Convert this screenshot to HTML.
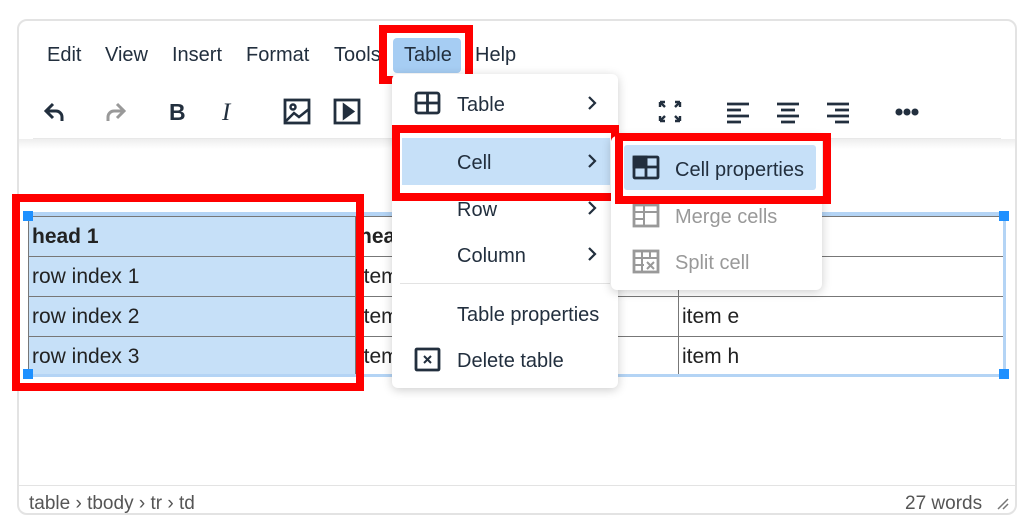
<!DOCTYPE html>
<html><head><style>
*{box-sizing:border-box;margin:0;padding:0}
body{width:1024px;height:532px;background:#fff;font-family:"Liberation Sans",sans-serif;color:#222f3e;position:relative;overflow:hidden}
.abs{position:absolute}
.ed{left:17px;top:19px;width:1000px;height:496px;border:2px solid #e3e3e3;border-radius:10px}
.mb{font-size:20px;top:44px}
.sep{left:33px;top:138px;width:968px;height:1px;background:#e8e8e8}
.shadow{left:19px;top:139px;width:996px;height:10px;background:linear-gradient(#eee,#fff)}
table{border-collapse:collapse;font-size:21px}
td{border:1px solid #777;height:40px;padding:0 3px;color:#222}
.sel{background:#c6e0f8}
.h{width:10px;height:10px;background:#1e90ff}
.red{border:8px solid #f00}
.menu{background:#fff;border-radius:6px;box-shadow:0 2px 10px rgba(0,0,0,.2)}
.it{font-size:20px;color:#222f3e}
.g{color:#999}
.st{font-size:19px;color:#555}
</style></head><body>
<div class="abs ed"></div>
<div class="abs mb" style="left:47px">Edit</div>
<div class="abs mb" style="left:105px">View</div>
<div class="abs mb" style="left:172px">Insert</div>
<div class="abs mb" style="left:246px">Format</div>
<div class="abs mb" style="left:334px">Tools</div>
<div class="abs" style="left:393px;top:38px;width:68px;height:35px;background:#a6cdf3;border-radius:4px"></div>
<div class="abs mb" style="left:404px">Table</div>
<div class="abs mb" style="left:475px">Help</div>
<div class="abs red" style="left:379px;top:25px;width:94px;height:59px"></div>

<svg class="abs" style="left:0;top:90px" width="1024" height="45" fill="none" stroke="#222f3e" stroke-width="2.5">
<path d="M53 14 l-7 7 7 7 M46 21 h10 a6 6 0 0 1 6 6 v4" stroke-width="3"/>
<path d="M117 14 l7 7 -7 7 M124 21 h-10 a6 6 0 0 0 -6 6 v4" stroke="#999" stroke-width="3"/>
<text x="169" y="30" font-size="23" font-weight="bold" fill="#222f3e" stroke="none" font-family="Liberation Sans">B</text>
<text x="222" y="30" font-size="25" font-style="italic" fill="#222f3e" stroke="none" font-family="Liberation Serif">I</text>
<rect x="285" y="10" width="24" height="23" stroke-width="2.8"/><circle cx="293" cy="17" r="2.5"/><path d="M286 31 l8 -8 5 4 10 -8"/>
<rect x="335" y="10" width="24" height="23" stroke-width="2.8"/><path d="M344 15 v13 l9 -6.5z" fill="#222f3e"/>
<path d="M660 12 h5 M660 12 v5 M660 12 l5 5 M680 12 h-5 M680 12 v5 M680 12 l-5 5 M660 31 h5 M660 31 v-5 M660 31 l5 -5 M680 31 h-5 M680 31 v-5 M680 31 l-5 -5" stroke-width="2.4"/>
<path d="M727 14 h22 M727 20 h14 M727 26 h22 M727 32 h14" stroke-width="2.8"/>
<path d="M777 14 h22 M781 20 h14 M777 26 h22 M781 32 h14" stroke-width="2.8"/>
<path d="M827 14 h22 M835 20 h14 M827 26 h22 M835 32 h14" stroke-width="2.8"/>
<circle cx="899" cy="22" r="2.3" fill="#222f3e"/><circle cx="907" cy="22" r="2.3" fill="#222f3e"/><circle cx="915" cy="22" r="2.3" fill="#222f3e"/>
</svg>
<div class="abs shadow"></div>
<div class="abs sep"></div>

<div class="abs" style="left:28px;top:212px;width:977px;height:4px;background:#b4d4f5"></div>
<table class="abs" style="left:28px;top:216px;width:977px">
<tr><td class="sel" style="width:327px"><b>head 1</b></td><td style="width:323px"><b>head 2</b></td><td><b>head 3</b></td></tr>
<tr><td class="sel">row index 1</td><td>item a</td><td>item b</td></tr>
<tr><td class="sel">row index 2</td><td>item d</td><td>item e</td></tr>
<tr><td class="sel">row index 3</td><td>item g</td><td>item h</td></tr>
</table>
<div class="abs" style="left:1003px;top:212px;width:3px;height:167px;background:#b4d4f5"></div>
<div class="abs" style="left:28px;top:374px;width:977px;height:3px;background:#b4d4f5"></div>
<div class="abs h" style="left:23px;top:211px"></div>
<div class="abs h" style="left:999px;top:211px"></div>
<div class="abs h" style="left:23px;top:369px"></div>
<div class="abs h" style="left:999px;top:369px"></div>
<div class="abs red" style="left:12px;top:194px;width:352px;height:197px"></div>

<div class="abs menu" style="left:392px;top:74px;width:226px;height:314px"></div>
<div class="abs" style="left:402px;top:138px;width:208px;height:47px;background:#c6e0f8"></div>
<svg class="abs" style="left:0;top:0" width="1024" height="532" fill="none" stroke="#222f3e" stroke-width="2.8">
<rect x="416" y="93" width="23" height="20" rx="2" /><path d="M416 103 h23 M427.5 93 v20"/>
<rect x="416" y="349" width="23" height="21" rx="1"/><path d="M424 356 l7 7 M431 356 l-7 7" stroke-width="2"/>
<path d="M589 97 l6 6 -6 6 M589 155 l6 6 -6 6 M589 202 l6 6 -6 6 M589 248 l6 6 -6 6" stroke-width="2.2"/>
</svg>
<div class="abs it" style="left:457px;top:94px">Table</div>
<div class="abs it" style="left:457px;top:152px">Cell</div>
<div class="abs it" style="left:457px;top:199px">Row</div>
<div class="abs it" style="left:457px;top:245px">Column</div>
<div class="abs" style="left:400px;top:283px;width:210px;height:1px;background:#e3e3e3"></div>
<div class="abs it" style="left:457px;top:304px">Table properties</div>
<div class="abs it" style="left:457px;top:350px">Delete table</div>
<div class="abs red" style="left:392px;top:125px;width:227px;height:76px"></div>

<div class="abs menu" style="left:611px;top:136px;width:211px;height:154px"></div>
<div class="abs" style="left:624px;top:145px;width:192px;height:45px;background:#c6e0f8;border-radius:3px"></div>
<svg class="abs" style="left:0;top:0" width="1024" height="532" fill="none" stroke-width="2.8">
<rect x="634" y="157" width="24" height="21" rx="1" stroke="#222f3e"/><rect x="634" y="157" width="12" height="10" fill="#222f3e" stroke="#222f3e"/><path d="M634 167 h24 M646 157 v21" stroke="#222f3e"/>
<rect x="634" y="205" width="24" height="21" stroke="#999"/><path d="M634 212 h24 M634 219 h10 M644 205 v21" stroke="#999" stroke-width="2"/>
<rect x="634" y="251" width="24" height="21" stroke="#999"/><path d="M634 258 h24 M634 265 h10 M642 251 v21 M650 251 v7 M647 262 l7 7 M654 262 l-7 7" stroke="#999" stroke-width="2"/>
</svg>
<div class="abs it" style="left:675px;top:159px">Cell properties</div>
<div class="abs it g" style="left:675px;top:206px">Merge cells</div>
<div class="abs it g" style="left:675px;top:252px">Split cell</div>
<div class="abs red" style="left:615px;top:133px;width:216px;height:71px"></div>

<div class="abs" style="left:19px;top:485px;width:996px;height:1px;background:#e3e3e3"></div>
<div class="abs st" style="left:29px;top:493px">table › tbody › tr › td</div>
<div class="abs st" style="left:905px;top:493px">27 words</div>
<svg class="abs" style="left:996px;top:497px" width="14" height="14" stroke="#777" stroke-width="1.5"><path d="M2 12 L12 2 M7 12 L12 7"/></svg>
</body></html>
